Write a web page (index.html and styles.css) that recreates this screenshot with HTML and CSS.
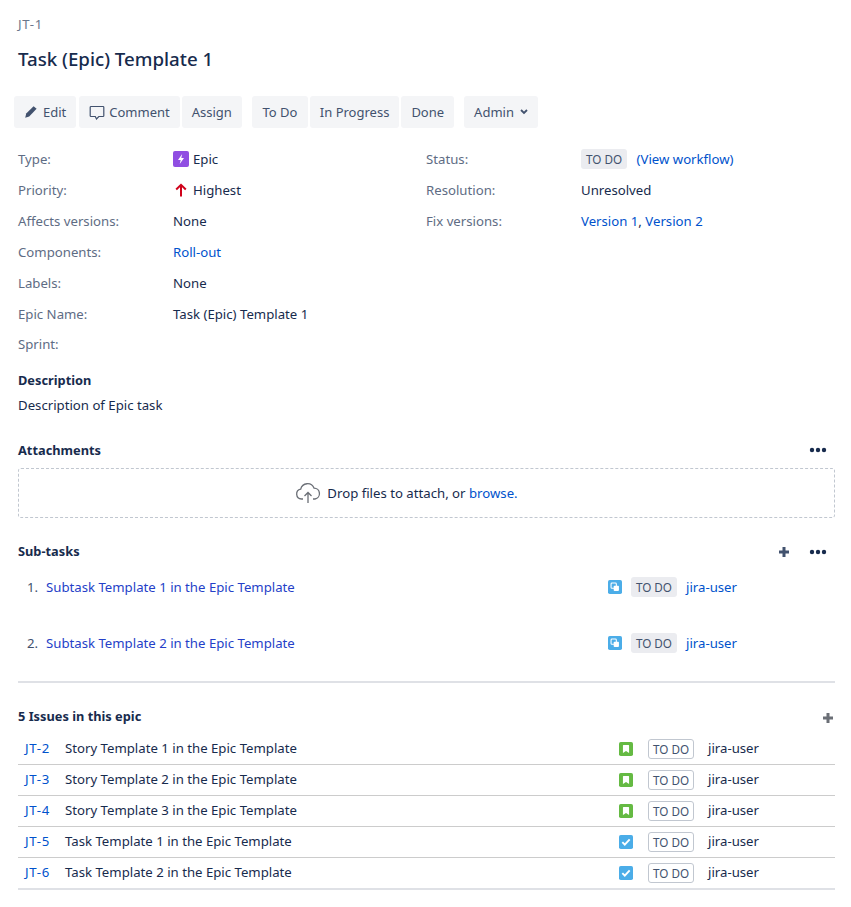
FILE: index.html
```html
<!DOCTYPE html>
<html lang="en">
  <head>
    <meta charset="UTF-8" />
    <title>JT-1 Task (Epic) Template 1</title>
    <link rel="stylesheet" href="styles.css">
  </head>
  <body>
    <svg class="sprites" width="0" height="0">
      <symbol id="story" viewBox="0 0 16 16">
        <rect width="16" height="16" rx="2" fill="#65ba43"/>
        <path d="M5 3.500h6a.5.5 0 0 1 .5.5v8.500L8 10.200l-3.500 2.300V4a.5.5 0 0 1 .5-.5z" fill="#fff"/>
      </symbol>
      <symbol id="task" viewBox="0 0 16 16">
        <rect width="16" height="16" rx="2" fill="#4bade8"/>
        <path d="M3.800 8.200l2.800 2.800 5.600-6" fill="none" stroke="#fff" stroke-width="2.200"/>
      </symbol>
      <symbol id="subtask" viewBox="0 0 16 16">
        <rect width="16" height="16" rx="2" fill="#4bade8"/>
        <rect x="3.500" y="3.500" width="6" height="6" rx="1" fill="none" stroke="#fff" stroke-width="1.200"/>
        <rect x="6.500" y="6.500" width="6" height="6" rx="1" fill="#fff"/>
      </symbol>
      <symbol id="dots" viewBox="0 0 18 6">
        <circle cx="3" cy="3" r="2.200"/><circle cx="9" cy="3" r="2.200"/><circle cx="15" cy="3" r="2.200"/>
      </symbol>
      <symbol id="plus" viewBox="0 0 12 12">
        <path d="M6 1v10M1 6h10" fill="none" stroke="currentColor" stroke-width="3"/>
      </symbol>
    </svg>

    <div class="issue-key">JT-1</div>
    <h1 class="issue-title">Task (Epic) Template 1</h1>

    <div class="toolbar">
      <div class="btn-group">
        <a class="btn btn-edit">
          <svg width="14" height="14" viewBox="0 0 14 14"><path d="M9.600 1.200l3 2.600-7.400 7.600-4 1.400 1-4.200z" fill="#42526e"/></svg>
          Edit
        </a>
        <a class="btn">
          <svg width="16" height="16" viewBox="0 0 16 16"><path d="M2 2.500h12a.8.8 0 0 1 .8.8v8.400a.8.8 0 0 1-.8.8H9.800L7.500 15l-1.200-2.500H2a.8.8 0 0 1-.8-.8V3.300a.8.8 0 0 1 .8-.8z" fill="none" stroke="#42526e" stroke-width="1.200"/></svg>
          Comment
        </a>
        <a class="btn">Assign</a>
      </div>
      <div class="btn-group">
        <a class="btn btn-todo">To Do</a>
        <a class="btn">In Progress</a>
        <a class="btn">Done</a>
      </div>
      <div class="btn-group">
        <a class="btn btn-admin">
          Admin
          <svg width="8" height="6" viewBox="0 0 8 6"><path d="M1 1l3 3 3-3" fill="none" stroke="#42526e" stroke-width="1.800"/></svg>
        </a>
      </div>
    </div>

    <div class="details">
      <dl class="fields">
        <dt>Type:</dt>
        <dd class="with-icon">
          <svg width="16" height="16" viewBox="0 0 16 16"><rect width="16" height="16" rx="2" fill="#904ee2"/><path d="M9.200 3L5 9h2.700l-1 4L11 7H8.300z" fill="#fff"/></svg>
          Epic
        </dd>
        <dt>Priority:</dt>
        <dd class="with-icon">
          <svg width="16" height="16" viewBox="0 0 16 16"><path d="M8 14.500V3M3.200 7.500L8 2.800l4.800 4.700" fill="none" stroke="#d0021b" stroke-width="2"/></svg>
          Highest
        </dd>
        <dt>Affects versions:</dt>
        <dd>None</dd>
        <dt>Components:</dt>
        <dd><a class="link">Roll-out</a></dd>
        <dt>Labels:</dt>
        <dd>None</dd>
        <dt>Epic Name:</dt>
        <dd>Task (Epic) Template 1</dd>
        <dt class="sprint">Sprint:</dt>
        <dd></dd>
      </dl>
      <dl class="fields">
        <dt>Status:</dt>
        <dd><span class="lozenge">TO DO</span> <a class="link workflow">(View workflow)</a></dd>
        <dt>Resolution:</dt>
        <dd>Unresolved</dd>
        <dt>Fix versions:</dt>
        <dd><a class="link">Version 1</a>, <a class="link">Version 2</a></dd>
      </dl>
    </div>

    <section class="description">
      <h2 class="section-title">Description</h2>
      <p>Description of Epic task</p>
    </section>

    <section class="attachments">
      <div class="section-head">
        <h2 class="section-title">Attachments</h2>
        <svg class="dots" width="18" height="6"><use href="#dots"/></svg>
      </div>
      <div class="dropzone">
        <svg width="26" height="22" viewBox="0 0 26 22"><path d="M8 17H6.500a5 5 0 0 1-.8-9.900 7 7 0 0 1 13.300-1 5.500 5.500 0 0 1 1 10.900H18M13 21V11M9.500 14l3.500-3.500 3.500 3.500" fill="none" stroke="#6b6f76" stroke-width="1.300"/></svg>
        <span>Drop files to attach, or <a class="link">browse.</a></span>
      </div>
    </section>

    <section class="subtasks">
      <div class="section-head">
        <h2 class="section-title">Sub-tasks</h2>
        <div class="head-actions">
          <svg class="plus" width="12" height="12"><use href="#plus"/></svg>
          <svg class="dots" width="18" height="6"><use href="#dots"/></svg>
        </div>
      </div>
      <ol class="subtask-list">
        <li class="subtask">
          <span class="num">1.</span>
          <a class="subtask-name">Subtask Template 1 in the Epic Template</a>
          <svg class="type" width="14" height="14"><use href="#subtask"/></svg>
          <span class="lozenge">TO DO</span>
          <a class="link">jira-user</a>
        </li>
        <li class="subtask">
          <span class="num">2.</span>
          <a class="subtask-name">Subtask Template 2 in the Epic Template</a>
          <svg class="type" width="14" height="14"><use href="#subtask"/></svg>
          <span class="lozenge">TO DO</span>
          <a class="link">jira-user</a>
        </li>
      </ol>
    </section>

    <section class="epic-issues">
      <div class="section-head">
        <h2 class="section-title">5 Issues in this epic</h2>
        <svg class="plus grey" width="12" height="12"><use href="#plus"/></svg>
      </div>
      <table class="issue-table">
        <tr>
          <td class="key"><a class="link">JT-2</a></td>
          <td class="summary">Story Template 1 in the Epic Template</td>
          <td class="kind"><svg width="14" height="14"><use href="#story"/></svg></td>
          <td class="state"><span class="lozenge outline">TO DO</span></td>
          <td class="owner">jira-user</td>
        </tr>
        <tr>
          <td class="key"><a class="link">JT-3</a></td>
          <td class="summary">Story Template 2 in the Epic Template</td>
          <td class="kind"><svg width="14" height="14"><use href="#story"/></svg></td>
          <td class="state"><span class="lozenge outline">TO DO</span></td>
          <td class="owner">jira-user</td>
        </tr>
        <tr>
          <td class="key"><a class="link">JT-4</a></td>
          <td class="summary">Story Template 3 in the Epic Template</td>
          <td class="kind"><svg width="14" height="14"><use href="#story"/></svg></td>
          <td class="state"><span class="lozenge outline">TO DO</span></td>
          <td class="owner">jira-user</td>
        </tr>
        <tr>
          <td class="key"><a class="link">JT-5</a></td>
          <td class="summary">Task Template 1 in the Epic Template</td>
          <td class="kind"><svg width="14" height="14"><use href="#task"/></svg></td>
          <td class="state"><span class="lozenge outline">TO DO</span></td>
          <td class="owner">jira-user</td>
        </tr>
        <tr>
          <td class="key"><a class="link">JT-6</a></td>
          <td class="summary">Task Template 2 in the Epic Template</td>
          <td class="kind"><svg width="14" height="14"><use href="#task"/></svg></td>
          <td class="state"><span class="lozenge outline">TO DO</span></td>
          <td class="owner">jira-user</td>
        </tr>
      </table>
    </section>
  </body>
</html>
```

FILE: styles.css
```css
body {
  font-family: "Noto Sans", "Open Sans", sans-serif;
  font-size: 13.2px;
  line-height: 20px;
  color: #172b4d;
  background: #fff;
  margin: 0;
  padding: 14px 16px 0 18px;
}
.sprites {
  position: absolute;
}
a {
  text-decoration: none;
}
.link {
  color: #0052cc;
}
.issue-key {
  color: #6b778c;
  letter-spacing: 0.7px;
}
.issue-title {
  font-size: 18.7px;
  line-height: 28px;
  font-weight: 500;
  margin: 11px 0 0;
}
.toolbar {
  display: flex;
  gap: 10px;
  margin: 23px 0 0 -4px;
}
.btn-group {
  display: flex;
  gap: 2px;
}
.btn {
  display: flex;
  align-items: center;
  gap: 4px;
  height: 32px;
  padding: 0 10px;
  font-size: 13px;
  background: #f4f5f7;
  border-radius: 3px;
  color: #42526e;
}
.btn-edit {
  gap: 5px;
  margin-right: 1px;
}
.btn-todo {
  padding: 0 10.5px;
}
.btn-admin {
  gap: 6px;
}
.details {
  display: grid;
  grid-template-columns: 408px 1fr;
  margin-top: 15px;
}
.fields {
  display: grid;
  grid-template-columns: 155px 1fr;
  grid-auto-rows: 31px;
  align-items: center;
  align-content: start;
  margin: 0;
}
.fields dt {
  color: #5e6c84;
}
.fields dd {
  margin: 0;
}
.fields .sprint {
  margin-top: -2px;
}
.with-icon {
  display: flex;
  align-items: center;
  gap: 4px;
}
.lozenge {
  display: inline-block;
  font-size: 11.7px;
  line-height: 20px;
  padding: 0 5px;
  background: #ebecf0;
  border-radius: 3px;
  color: #42526e;
}
.lozenge.outline {
  background: #fff;
  border: 1px solid #c1c7d0;
  padding: 0 4px;
  line-height: 18px;
}
.workflow {
  margin-left: 6px;
}
.section-title {
  font-size: 12.8px;
  line-height: 20px;
  font-weight: 700;
  margin: 0;
}
.description {
  margin-top: 10px;
}
.description p {
  margin: 5px 0 0;
}
.attachments {
  margin-top: 25px;
}
.section-head {
  display: flex;
  justify-content: space-between;
  align-items: center;
}
.dots {
  fill: #172b4d;
  margin-right: 8px;
}
.head-actions {
  display: flex;
  align-items: center;
  gap: 19px;
  margin-top: 2px;
}
.plus {
  color: #42526e;
}
.plus.grey {
  color: #6b6f76;
  margin: 3px 1px 0 0;
}
.dropzone {
  display: flex;
  justify-content: center;
  align-items: center;
  gap: 6px;
  height: 48px;
  margin-top: 8px;
  padding-right: 40px;
  border: 1px dashed #c1c7d0;
  border-radius: 3px;
}
.subtasks {
  margin-top: 23px;
}
.subtask-list {
  list-style: none;
  margin: 13px 0 0;
  padding: 0;
}
.subtask {
  display: flex;
  align-items: center;
  height: 56px;
  padding-bottom: 30px;
  box-sizing: border-box;
}
.subtask .num {
  width: 19px;
  padding-left: 9px;
  color: #42526e;
}
.subtask-name {
  color: #253fc8;
  flex: 1;
}
.subtask .type {
  margin-right: 9px;
}
.subtask .lozenge {
  margin-right: 9px;
}
.subtask .link {
  width: 149px;
}
.epic-issues {
  border-top: 2px solid #dfe1e6;
  margin-top: -5px;
  padding-top: 23px;
}
.issue-table {
  width: 100%;
  border-spacing: 0;
  margin-top: 8px;
}
.issue-table td {
  box-sizing: border-box;
  height: 31px;
  padding: 0;
  border-bottom: 1px solid #ccc;
  vertical-align: middle;
}
.issue-table tr:last-child td {
  height: 32px;
  border-bottom: 2px solid #dfe1e6;
}
.issue-table .key {
  width: 47px;
  padding: 0 0 2px 7px;
  letter-spacing: 0.7px;
}
.issue-table .summary,
.issue-table .owner {
  padding-bottom: 2px;
}
.kind {
  width: 29px;
}
.kind svg {
  display: block;
}
.state {
  width: 60px;
}
.owner {
  width: 127px;
}
```
